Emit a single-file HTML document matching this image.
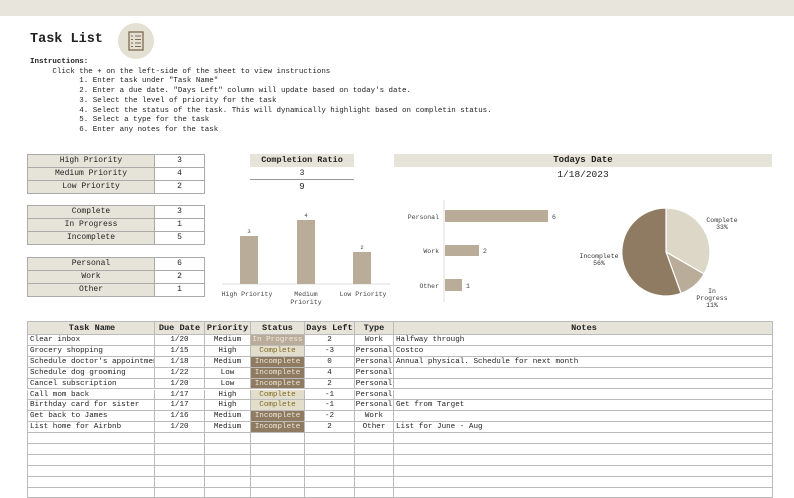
<!DOCTYPE html>
<html><head><meta charset="utf-8"><style>
*{margin:0;padding:0;box-sizing:border-box}
body{width:794px;height:494px;overflow:hidden;background:#fff;font-family:"Liberation Mono",monospace;color:#222;position:relative}
.a{position:absolute}
.top{left:0;top:0;width:794px;height:16px;background:#e8e5dc}
h1{position:absolute;left:30px;top:32px;font-size:13.5px;font-weight:bold;letter-spacing:0px}
.ins{left:30px;top:58px;font-size:7.47px;line-height:9.7px;white-space:pre}
.st{position:absolute;left:27px;width:178px;font-size:8px;border-top:1px solid #aaa}
.st div{display:flex;height:13px;border-bottom:1px solid #aaa}
.st span{display:block;line-height:12px;text-align:center}
.st span:first-child{width:128px;background:#e6e3d8;border-left:1px solid #aaa;border-right:1px solid #aaa}
.st span:last-child{width:50px;border-right:1px solid #aaa}
.hd{background:#e6e3d8;font-weight:bold;text-align:center;font-size:8.5px;line-height:13px;height:13px}
.row{position:absolute;left:27px;width:746px;display:flex;border-bottom:1px solid #bbb;font-size:7.6px}
.row span{display:block;border-right:1px solid #bbb;overflow:hidden;white-space:nowrap;text-align:center;height:100%}
.row span:first-child{border-left:1px solid #bbb}
.h span{background:#e6e3d8;font-weight:bold;font-size:8.6px;line-height:13px}
.w0{width:128px;text-align:left!important;padding-left:2px}
.w1{width:50px}.w2{width:46px}.w3{width:54px}.w4{width:50px}.w5{width:39px}
.w6{width:379px;text-align:left!important;padding-left:2px}
.h .w6,.h .w0{text-align:center!important}
.ip{background:#b9ad9a;color:#efe9dd}
.cp{background:#e3ddcb;color:#7d6a20}
.ic{background:#8e7b62;color:#eee6d6}
</style></head><body>
<div class="a top"></div>
<h1>Task List</h1>
<svg class="a" style="left:118px;top:23px" width="36" height="36" viewBox="0 0 36 36">
<circle cx="18" cy="18" r="18" fill="#e4e0d4"/>
<rect x="11" y="9" width="14" height="18" fill="none" stroke="#7c6c52" stroke-width="1.3"/>
<g stroke="#7c6c52" stroke-width="1"><path d="M13 13h2M17 13h6M13 16.5h2M17 16.5h6M13 20h2M17 20h6M13 23.5h2M17 23.5h6"/></g>
</svg>
<div class="a ins"><b>Instructions:</b>
     Click the + on the left-side of the sheet to view instructions
           1. Enter task under "Task Name"
           2. Enter a due date. "Days Left" column will update based on today's date.
           3. Select the level of priority for the task
           4. Select the status of the task. This will dynamically highlight based on completin status.
           5. Select a type for the task
           6. Enter any notes for the task</div>

<div class="st" style="top:154px"><div><span>High Priority</span><span>3</span></div><div><span>Medium Priority</span><span>4</span></div><div><span>Low Priority</span><span>2</span></div></div>
<div class="st" style="top:205px"><div><span>Complete</span><span>3</span></div><div><span>In Progress</span><span>1</span></div><div><span>Incomplete</span><span>5</span></div></div>
<div class="st" style="top:257px"><div><span>Personal</span><span>6</span></div><div><span>Work</span><span>2</span></div><div><span>Other</span><span>1</span></div></div>

<div class="a hd" style="left:250px;top:154px;width:104px">Completion Ratio</div>
<div class="a" style="left:250px;top:169px;width:104px;text-align:center;font-size:8px;line-height:10px;border-bottom:1px solid #999">3</div>
<div class="a" style="left:250px;top:182px;width:104px;text-align:center;font-size:9px">9</div>

<div class="a hd" style="left:394px;top:154px;width:378px;font-size:9px">Todays Date</div>
<div class="a" style="left:394px;top:169px;width:378px;text-align:center;font-size:9.5px">1/18/2023</div>

<svg class="a" style="left:215px;top:200px" width="180" height="110" viewBox="0 0 180 110" font-family="Liberation Mono" font-size="6.5" fill="#444">
<line x1="7" y1="84" x2="175" y2="84" stroke="#ddd"/>
<rect x="25" y="36" width="18" height="48" fill="#b9ad9a"/>
<rect x="82" y="20" width="18" height="64" fill="#b9ad9a"/>
<rect x="138" y="52" width="18" height="32" fill="#b9ad9a"/>
<text x="34" y="33" text-anchor="middle" font-size="5.5">3</text>
<text x="91" y="17" text-anchor="middle" font-size="5.5">4</text>
<text x="147" y="49" text-anchor="middle" font-size="5.5">2</text>
<text x="32" y="96" text-anchor="middle">High Priority</text>
<text x="91" y="96" text-anchor="middle">Medium</text>
<text x="91" y="104" text-anchor="middle">Priority</text>
<text x="148" y="96" text-anchor="middle">Low Priority</text>
</svg>

<svg class="a" style="left:400px;top:195px" width="160" height="112" viewBox="0 0 160 112" font-family="Liberation Mono" font-size="6.5" fill="#444">
<line x1="44" y1="5" x2="44" y2="107" stroke="#ddd"/>
<rect x="45" y="15" width="103" height="12" fill="#b9ad9a"/>
<rect x="45" y="50" width="34" height="11" fill="#b9ad9a"/>
<rect x="45" y="84" width="17" height="12" fill="#b9ad9a"/>
<text x="39" y="24" text-anchor="end">Personal</text>
<text x="39" y="58" text-anchor="end">Work</text>
<text x="39" y="93" text-anchor="end">Other</text>
<text x="152" y="24">6</text><text x="83" y="58">2</text><text x="66" y="93">1</text>
</svg>

<svg class="a" style="left:570px;top:200px" width="180" height="112" viewBox="0 0 180 112" font-family="Liberation Mono" font-size="6.5" fill="#333">
<g stroke="#fff" stroke-width="1.2">
<path d="M96 52 L96 8 A44 44 0 0 1 134.1 74 Z" fill="#dcd7c6"/>
<path d="M96 52 L134.1 74 A44 44 0 0 1 111 93.3 Z" fill="#b9ad9a"/>
<path d="M96 52 L111 93.3 A44 44 0 1 1 96 8 Z" fill="#8e7b62"/>
</g>
<text x="152" y="22" text-anchor="middle">Complete</text><text x="152" y="29" text-anchor="middle">33%</text>
<text x="29" y="58" text-anchor="middle">Incomplete</text><text x="29" y="65" text-anchor="middle">56%</text>
<text x="142" y="93" text-anchor="middle">In</text><text x="142" y="100" text-anchor="middle">Progress</text><text x="142" y="107" text-anchor="middle">11%</text>
</svg>

<div class="row h" style="top:321px;height:14px;border-top:1px solid #bbb"><span class="w0">Task Name</span><span class="w1">Due Date</span><span class="w2">Priority</span><span class="w3">Status</span><span class="w4">Days Left</span><span class="w5">Type</span><span class="w6">Notes</span></div>
<div class="row" style="top:335px;height:10.9px;line-height:10px"><span class="w0">Clear inbox</span><span class="w1">1/20</span><span class="w2">Medium</span><span class="w3 ip">In Progress</span><span class="w4">2</span><span class="w5">Work</span><span class="w6">Halfway through</span></div>
<div class="row" style="top:345.9px;height:10.9px;line-height:10px"><span class="w0">Grocery shopping</span><span class="w1">1/15</span><span class="w2">High</span><span class="w3 cp">Complete</span><span class="w4">-3</span><span class="w5">Personal</span><span class="w6">Costco</span></div>
<div class="row" style="top:356.8px;height:10.9px;line-height:10px"><span class="w0">Schedule doctor's appointment</span><span class="w1">1/18</span><span class="w2">Medium</span><span class="w3 ic">Incomplete</span><span class="w4">0</span><span class="w5">Personal</span><span class="w6">Annual physical. Schedule for next month</span></div>
<div class="row" style="top:367.7px;height:10.9px;line-height:10px"><span class="w0">Schedule dog grooming</span><span class="w1">1/22</span><span class="w2">Low</span><span class="w3 ic">Incomplete</span><span class="w4">4</span><span class="w5">Personal</span><span class="w6"></span></div>
<div class="row" style="top:378.6px;height:10.9px;line-height:10px"><span class="w0">Cancel subscription</span><span class="w1">1/20</span><span class="w2">Low</span><span class="w3 ic">Incomplete</span><span class="w4">2</span><span class="w5">Personal</span><span class="w6"></span></div>
<div class="row" style="top:389.5px;height:10.9px;line-height:10px"><span class="w0">Call mom back</span><span class="w1">1/17</span><span class="w2">High</span><span class="w3 cp">Complete</span><span class="w4">-1</span><span class="w5">Personal</span><span class="w6"></span></div>
<div class="row" style="top:400.4px;height:10.9px;line-height:10px"><span class="w0">Birthday card for sister</span><span class="w1">1/17</span><span class="w2">High</span><span class="w3 cp">Complete</span><span class="w4">-1</span><span class="w5">Personal</span><span class="w6">Get from Target</span></div>
<div class="row" style="top:411.3px;height:10.9px;line-height:10px"><span class="w0">Get back to James</span><span class="w1">1/16</span><span class="w2">Medium</span><span class="w3 ic">Incomplete</span><span class="w4">-2</span><span class="w5">Work</span><span class="w6"></span></div>
<div class="row" style="top:422.2px;height:10.9px;line-height:10px"><span class="w0">List home for Airbnb</span><span class="w1">1/20</span><span class="w2">Medium</span><span class="w3 ic">Incomplete</span><span class="w4">2</span><span class="w5">Other</span><span class="w6">List for June - Aug</span></div>
<div class="row" style="top:433.1px;height:10.9px"><span class="w0"></span><span class="w1"></span><span class="w2"></span><span class="w3"></span><span class="w4"></span><span class="w5"></span><span class="w6"></span></div>
<div class="row" style="top:444px;height:10.9px"><span class="w0"></span><span class="w1"></span><span class="w2"></span><span class="w3"></span><span class="w4"></span><span class="w5"></span><span class="w6"></span></div>
<div class="row" style="top:454.9px;height:10.9px"><span class="w0"></span><span class="w1"></span><span class="w2"></span><span class="w3"></span><span class="w4"></span><span class="w5"></span><span class="w6"></span></div>
<div class="row" style="top:465.8px;height:10.9px"><span class="w0"></span><span class="w1"></span><span class="w2"></span><span class="w3"></span><span class="w4"></span><span class="w5"></span><span class="w6"></span></div>
<div class="row" style="top:476.7px;height:10.9px"><span class="w0"></span><span class="w1"></span><span class="w2"></span><span class="w3"></span><span class="w4"></span><span class="w5"></span><span class="w6"></span></div>
<div class="row" style="top:487.6px;height:10.9px"><span class="w0"></span><span class="w1"></span><span class="w2"></span><span class="w3"></span><span class="w4"></span><span class="w5"></span><span class="w6"></span></div>
</body></html>
